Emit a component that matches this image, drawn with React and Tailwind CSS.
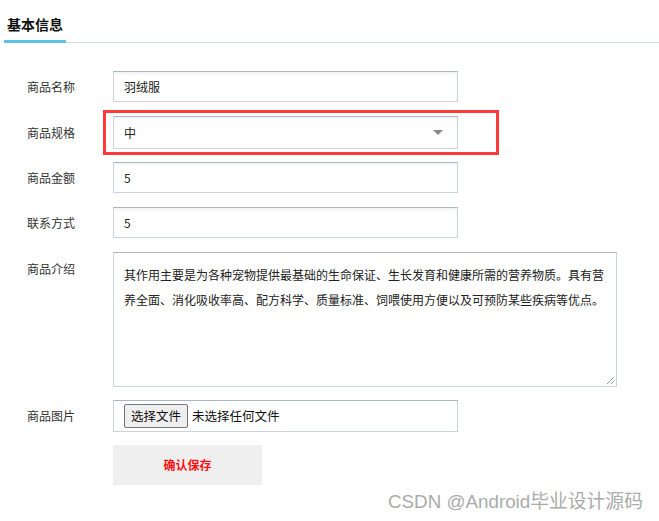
import React from "react";

const font = "font-['Noto_Sans_CJK_SC','Noto_Sans',sans-serif]";

const inputBox =
  "h-[31px] w-[345px] border border-[#cbd4da] border-t-[#a9b7c0] bg-white shadow-[inset_0_2px_3px_rgba(0,0,0,0.05)] flex items-center px-[10px] text-[12px] text-[#222]";

const Row = ({ label, children, top = false, className = "" }) => (
  <div className={`flex ${top ? "items-start" : "items-center"} ${className}`}>
    <div
      className={`w-[113px] pl-[27px] text-[12px] text-[#333] ${
        top ? "pt-[8px]" : ""
      }`}
    >
      {label}
    </div>
    {children}
  </div>
);

export default function App() {
  return (
    <div className={`relative w-[659px] h-[521px] bg-white overflow-hidden ${font}`}>
      {/* header */}
      <div className="flex border-b border-[#d3dce3] ml-[4px]">
        <div className="-mb-px border-b-[3px] border-[#5ec1ec] px-[3px] pt-[14px] pb-[6px] text-[14px] leading-5 font-bold text-[#111]">
          基本信息
        </div>
      </div>

      {/* form */}
      <div className="mt-[28px] flex flex-col">
        <Row label="商品名称">
          <div className={inputBox}>羽绒服</div>
        </Row>

        <Row label="商品规格" className="mt-[14px]">
          <div className="relative">
            <div className={`${inputBox} h-[33px] justify-between`}>
              <span>中</span>
              <span className="mr-[4px] w-0 h-0 border-l-[5px] border-r-[5px] border-t-[5px] border-l-transparent border-r-transparent border-t-[#888]" />
            </div>
            <div className="absolute -left-[10px] -top-[6px] w-[396px] h-[45px] border-[3px] border-[#ff3a3a] pointer-events-none" />
          </div>
        </Row>

        <Row label="商品金额" className="mt-[13px]">
          <div className={inputBox}>5</div>
        </Row>

        <Row label="联系方式" className="mt-[14px]">
          <div className={inputBox}>5</div>
        </Row>

        <Row label="商品介绍" top className="mt-[14px]">
          <div className="relative h-[135px] w-[504px] border border-[#cbd4da] border-t-[#a9b7c0] bg-white pl-[10px] pr-[4px] pt-[9px] text-[12px] leading-[25px] text-[#222]">
            其作用主要是为各种宠物提供最基础的生命保证、生长发育和健康所需的营养物质。具有营养全面、消化吸收率高、配方科学、质量标准、饲喂使用方便以及可预防某些疾病等优点。
            <svg
              className="absolute right-[1px] bottom-[1px]"
              width="9"
              height="9"
              viewBox="0 0 9 9"
            >
              <path d="M8 1L1 8M8 5L5 8" stroke="#999" strokeWidth="1" />
            </svg>
          </div>
        </Row>

        <Row label="商品图片" className="mt-[13px]">
          <div className="h-[32px] w-[345px] border border-[#cbd4da] border-t-[#a9b7c0] bg-white flex items-center pl-[10px] text-[12.5px] text-[#111]">
            <span className="h-[24px] px-[6px] flex items-center border border-[#767676] rounded-[2px] bg-[#efefef]">
              选择文件
            </span>
            <span className="ml-[4px]">未选择任何文件</span>
          </div>
        </Row>

        <div className="mt-[13px] ml-[113px] w-[149px] h-[40px] bg-[#efefef] flex items-center justify-center text-[12px] font-bold text-[#ff1010]">
          确认保存
        </div>
      </div>

      {/* watermark */}
      <div className="absolute left-[388px] top-[488px] text-[18.8px] text-[#ababab] font-['Liberation_Sans','Noto_Sans_CJK_SC',sans-serif] whitespace-nowrap">
        CSDN @Android毕业设计源码
      </div>
    </div>
  );
}
